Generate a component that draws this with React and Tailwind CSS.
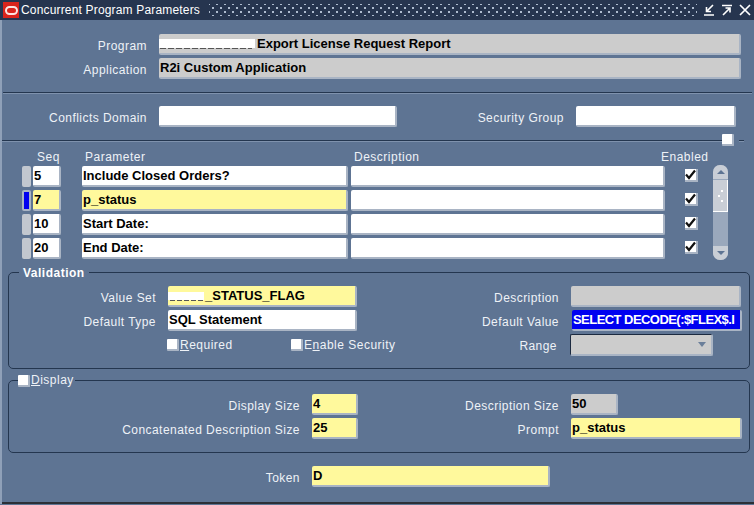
import React from "react";

const Field = ({ w, tone = "white", children, className = "" }) => {
  const tones = {
    white: "bg-white",
    gray: "bg-[#cccccc]",
    yellow: "bg-[#fff99c]",
    blue: "bg-[#0000f0] text-white tracking-[-0.55px]",
  };
  return (
    <div
      className={`h-[21px] shrink-0 overflow-hidden whitespace-nowrap rounded-[2px] border-r-2 border-b-2 border-[#a9b4c4] pl-[1px] text-[13px] leading-[20px] font-bold text-black ${tones[tone]} ${w} ${className}`}
    >
      {children}
    </div>
  );
};

const Label = ({ w, children, className = "" }) => (
  <div
    className={`h-[21px] shrink-0 text-right text-[12px] leading-[25px] tracking-[0.45px] text-[#eef2f7] ${w} ${className}`}
  >
    {children}
  </div>
);

const Check = ({ className = "" }) => (
  <span
    className={`block h-[12px] w-[12px] shrink-0 rounded-[1px] border-r-2 border-b-2 border-[#a9b4c4] bg-white ${className}`}
  />
);

const Tick = () => (
  <span className="mb-[3px] flex h-[13px] w-[13px] items-center justify-center border-r-2 border-b-2 border-[#a9b4c4] bg-white">
    <svg width="11" height="11" viewBox="0 0 11 11">
      <path d="M1 5.5 L4 9 L10 1.5" fill="none" stroke="#111" strokeWidth="2.2" />
    </svg>
  </span>
);

const rows = [
  { seq: "5", name: "Include Closed Orders?" },
  { seq: "7", name: "p_status", active: true },
  { seq: "10", name: "Start Date:" },
  { seq: "20", name: "End Date:" },
];

const Rule = () => <div className="h-px bg-[#24364f] shadow-[0_1px_0_#7f92ad]" />;

const App = () => {
  return (
    <div className="h-[505px] w-[754px] overflow-hidden bg-[#5e7493] font-['Liberation_Sans',Arial,sans-serif]">
      {/* title bar */}
      <div className="flex h-[20px] items-center bg-[#26354f] pl-[3px]">
        <span className="flex h-[16px] w-[16px] items-center justify-center bg-[#d9241c]">
          <span className="h-[9px] w-[13px] rounded-full border-[2.5px] border-[#fbe4e2]" />
        </span>
        <span className="ml-[2px] text-[12px] tracking-[0.17px] text-white">
          Concurrent Program Parameters
        </span>
        <div className="mr-[6px] ml-[9px] h-[12px] flex-1 bg-[radial-gradient(circle,#aebccf_0.9px,transparent_1.2px),radial-gradient(circle,#aebccf_0.9px,transparent_1.2px)] bg-[length:8px_8px] bg-[position:0_0,4px_4px]" />
        <div className="flex items-center gap-[6px] pr-[3px]">
          <svg width="12" height="12" viewBox="0 0 12 12" fill="none" stroke="white" strokeWidth="1.6">
            <path d="M10 1 L4 7 M3.5 3 V7.5 H8 M1 11 H11" />
          </svg>
          <svg width="12" height="12" viewBox="0 0 12 12" fill="none" stroke="white" strokeWidth="1.6">
            <path d="M1 1.5 H11 M2 11 L9 4 M4.5 4 H9 V8.5" />
          </svg>
          <svg width="12" height="12" viewBox="0 0 12 12" fill="none" stroke="white" strokeWidth="1.7">
            <path d="M1 1 L11 11 M11 1 L1 11" />
          </svg>
        </div>
      </div>

      <div className="border-l-2 border-[#8fa0b8] pt-[14px]">
        {/* program header */}
        <div className="flex">
          <Label w="w-[145px]">Program</Label>
          <Field w="w-[582px]" tone="gray" className="relative ml-[12px] pl-[98px]">
            <span className="absolute top-[13px] left-[1px] h-[2px] w-[92px] bg-[repeating-linear-gradient(90deg,#555_0_6px,transparent_6px_8px)]" />
            <span className="absolute top-[5px] left-[-2px] h-[9px] w-[98px] bg-white" />
            Export License Request Report
          </Field>
        </div>
        <div className="mt-[3px] flex">
          <Label w="w-[145px]">Application</Label>
          <Field w="w-[582px]" tone="gray" className="ml-[12px]">
            R2i Custom Application
          </Field>
        </div>
        <div className="mt-[13px] mr-[2px] ml-px">
          <Rule />
        </div>
        <div className="mt-[13px] flex">
          <Label w="w-[145px]">Conflicts Domain</Label>
          <Field w="w-[238px]" className="ml-[12px]" />
          <Label w="w-[167px]">Security Group</Label>
          <Field w="w-[160px]" className="ml-[12px]" />
        </div>

        {/* separator with toggle */}
        <div className="mt-[7px] flex items-center">
          <div className="w-[720px]">
            <Rule />
          </div>
          <Check />
          <div className="ml-[5px] w-[5px]">
            <Rule />
          </div>
        </div>

        {/* parameters table */}
        <div className="mt-[2px] flex h-[18px] text-[12px] leading-[18px] tracking-[0.5px] text-[#eef2f7]">
          <span className="ml-[35px] w-[48px]">Seq</span>
          <span className="w-[269px]">Parameter</span>
          <span className="w-[307px]">Description</span>
          <span>Enabled</span>
        </div>
        <div className="flex">
          <div className="ml-[20px] flex flex-col gap-[3px]">
            {rows.map((row) => (
              <div key={row.seq} className="flex">
                <span
                  className={`h-[21px] w-[9px] rounded-[2px] ${row.active ? "border-2 border-[#a9b4c4] bg-[#0000f0]" : "bg-[#c2c7cf]"}`}
                />
                <Field w="w-[28px]" tone={row.active ? "yellow" : "white"} className="ml-[2px]">
                  {row.seq}
                </Field>
                <Field w="w-[266px]" tone={row.active ? "yellow" : "white"} className="ml-[21px]">
                  {row.name}
                </Field>
                <Field w="w-[314px]" className="ml-[3px]" />
                <div className="flex w-[53px] items-center justify-center">
                  <Tick />
                </div>
              </div>
            ))}
          </div>
          {/* scrollbar */}
          <div className="mt-[-1px] ml-[-5px] flex h-[95px] w-[15px] flex-col overflow-hidden rounded-[7px] bg-[#9aa8bc]">
            <div className="flex h-[14px] items-center justify-center bg-[#c9ced6]">
              <span className="h-0 w-0 border-x-[4px] border-b-[4px] border-x-transparent border-b-[#5e7493]" />
            </div>
            <div className="mt-px flex h-[32px] flex-col items-center justify-center gap-[3px] border-r border-b border-white bg-[#c9ced6]">
              <span className="ml-[3px] h-[2px] w-[2px] bg-white" />
              <span className="mr-[3px] h-[2px] w-[2px] bg-white" />
              <span className="ml-[3px] h-[2px] w-[2px] bg-white" />
            </div>
            <div className="flex-1" />
            <div className="flex h-[14px] items-center justify-center bg-[#c9ced6]">
              <span className="h-0 w-0 border-x-[4px] border-t-[4px] border-x-transparent border-t-[#5e7493]" />
            </div>
          </div>
        </div>

        {/* validation */}
        <div className="relative mt-[12px] mr-[4px] ml-[6px] h-[97px] rounded-[5px] border border-[#24364f] pt-[13px]">
          <span className="absolute top-[-7px] left-[10px] bg-[#5e7493] px-[4px] text-[12px] leading-[15px] font-bold tracking-[0.5px] text-white">
            Validation
          </span>
          <div className="flex">
            <Label w="w-[147px]">Value Set</Label>
            <Field w="w-[189px]" tone="yellow" className="relative ml-[12px] pl-[37px]">
              <span className="absolute top-[13px] left-[2px] h-[2px] w-[34px] bg-[repeating-linear-gradient(90deg,#555_0_5px,transparent_5px_7px)]" />
              <span className="absolute top-[6px] left-0 h-[8px] w-[36px] bg-white" />
              _STATUS_FLAG
            </Field>
            <Label w="w-[202px]">Description</Label>
            <Field w="w-[170px]" tone="gray" className="ml-[12px]" />
          </div>
          <div className="mt-[3px] flex">
            <Label w="w-[147px]">Default Type</Label>
            <Field w="w-[189px]" className="ml-[12px]">
              SQL Statement
            </Field>
            <Label w="w-[202px]">Default Value</Label>
            <Field w="w-[170px]" tone="blue" className="ml-[13px]">
              SELECT DECODE(:$FLEX$.I
            </Field>
          </div>
          <div className="mt-[3px] flex">
            <div className="ml-[158px] flex h-[21px] w-[124px] items-center">
              <Check />
              <span className="ml-px text-[12px] tracking-[0.5px] text-[#eef2f7]">
                <u>R</u>equired
              </span>
            </div>
            <div className="flex h-[21px] w-[134px] items-center">
              <Check />
              <span className="ml-px text-[12px] tracking-[0.5px] text-[#eef2f7]">
                E<u>n</u>able Security
              </span>
            </div>
            <Label w="w-[132px]">Range</Label>
            <div className="ml-[13px] flex h-[22px] w-[143px] items-center justify-end rounded-[2px] border-t border-r-2 border-b-2 border-l border-t-[#1c2a40] border-r-[#a9b4c4] border-b-[#a9b4c4] border-l-[#1c2a40] bg-[#cccccc] pr-[5px]">
              <span className="h-0 w-0 border-x-[4px] border-t-[5px] border-x-transparent border-t-[#6b7f9a]" />
            </div>
          </div>
        </div>

        {/* display */}
        <div className="relative mt-[11px] mr-[4px] ml-[6px] h-[73px] rounded-[5px] border border-[#24364f] pt-[13px]">
          <div className="absolute top-[-8px] left-[9px] flex items-center bg-[#5e7493] pr-px">
            <Check />
            <span className="ml-px text-[12px] leading-[15px] tracking-[0.5px] text-[#eef2f7]">
              <u>D</u>isplay
            </span>
          </div>
          <div className="flex">
            <Label w="w-[291px]">Display Size</Label>
            <Field w="w-[46px]" tone="yellow" className="ml-[12px]">
              4
            </Field>
            <Label w="w-[201px]">Description Size</Label>
            <Field w="w-[47px]" tone="gray" className="ml-[12px]">
              50
            </Field>
          </div>
          <div className="mt-[3px] flex">
            <Label w="w-[291px]">Concatenated Description Size</Label>
            <Field w="w-[46px]" tone="yellow" className="ml-[12px]">
              25
            </Field>
            <Label w="w-[201px]">Prompt</Label>
            <Field w="w-[171px]" tone="yellow" className="ml-[12px]">
              p_status
            </Field>
          </div>
        </div>

        <div className="mt-[13px] flex">
          <Label w="w-[298px]">Token</Label>
          <Field w="w-[238px]" tone="yellow" className="ml-[12px]">
            D
          </Field>
        </div>
        <div className="mt-[15px] h-[2px] bg-[#2b2f36]" />
      </div>
    </div>
  );
};

export default App;
